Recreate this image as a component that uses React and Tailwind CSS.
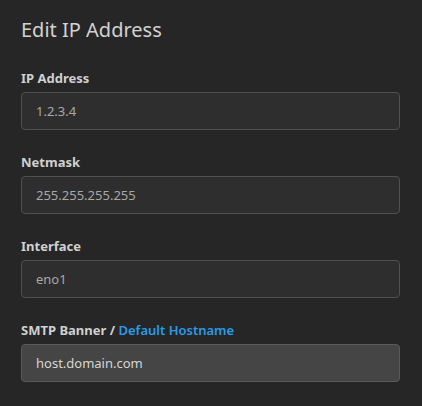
export default function App() {
  const fields = [
    { label: "IP Address", value: "1.2.3.4" },
    { label: "Netmask", value: "255.255.255.255" },
    { label: "Interface", value: "eno1" },
  ];

  return (
    <div
      className="min-h-[406px] w-[422px] bg-[#262626] pl-[21px] pr-[22px] pt-[16px]"
      style={{ fontFamily: '"Noto Sans", "Open Sans", sans-serif' }}
    >
      <h2 className="text-[20px] leading-[28px] text-[#d2d2d2] mb-[25px]">
        Edit IP Address
      </h2>

      {fields.map((f) => (
        <div key={f.label} className="mb-[23px]">
          <label className="block text-[13px] leading-[18px] font-bold text-[#d0d0d0] mb-[5px]">
            {f.label}
          </label>
          <input
            readOnly
            value={f.value}
            className="w-full h-[38px] rounded-[4px] border border-[#505050] bg-[#2e2e2e] px-[14px] text-[13px] text-[#a8a8a8] outline-none"
          />
        </div>
      ))}

      {/* SMTP BANNER */}
      <div>
        <label className="block text-[13px] leading-[18px] font-bold text-[#d0d0d0] mb-[5px]">
          SMTP Banner /{" "}
          <span className="text-[#2a9be6] font-semibold cursor-pointer">
            Default Hostname
          </span>
        </label>
        <input
          value="host.domain.com"
          readOnly
          className="w-full h-[38px] rounded-[4px] border border-[#5a5a5a] bg-[#454545] px-[14px] text-[13px] text-[#d6d6d6] outline-none"
        />
      </div>
    </div>
  );
}
